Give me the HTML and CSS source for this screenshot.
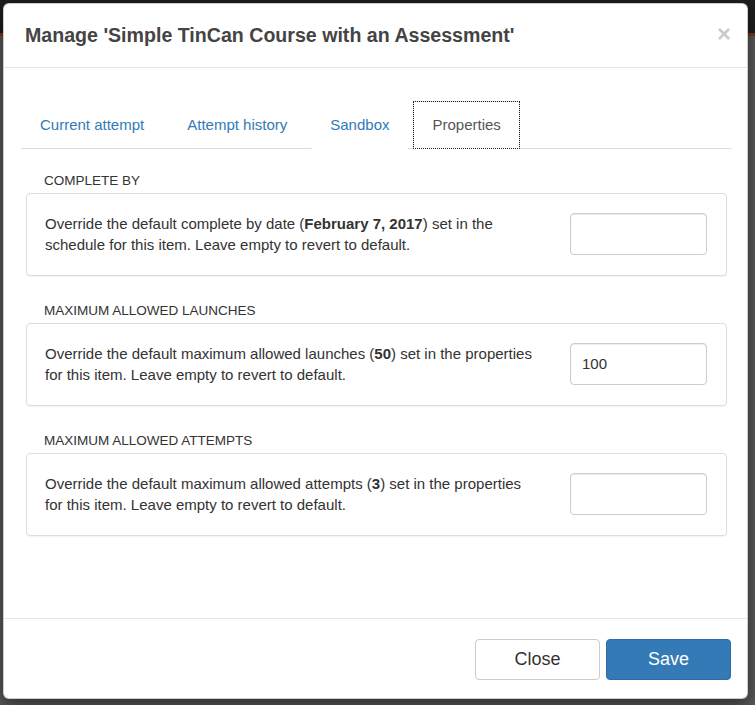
FILE: index.html
```html
<!DOCTYPE html>
<html>
<head>
<meta charset="utf-8">
<link rel="stylesheet" href="styles.css">
</head>
<body>
<div class="page">
  <div class="topbar"></div>
</div>
<div class="modal">
  <div class="modal-header">
    <h4 class="modal-title">Manage 'Simple TinCan Course with an Assessment'</h4>
    <span class="close">&times;</span>
  </div>
  <div class="modal-body">
    <ul class="tabs">
      <li class="tab">Current attempt</li>
      <li class="tab">Attempt history</li>
      <li class="tab hover">Sandbox</li>
      <li class="tab active">Properties</li>
    </ul>
    <div class="tab-content">
      <div class="section">
        <div class="label">Complete By</div>
        <div class="card">
          <div class="desc">Override the default complete by date (<b>February 7, 2017</b>) set in the schedule for this item. Leave empty to revert to default.</div>
          <div class="field"></div>
        </div>
      </div>
      <div class="section">
        <div class="label">Maximum Allowed Launches</div>
        <div class="card">
          <div class="desc">Override the default maximum allowed launches (<b>50</b>) set in the properties for this item. Leave empty to revert to default.</div>
          <div class="field">100</div>
        </div>
      </div>
      <div class="section">
        <div class="label">Maximum Allowed Attempts</div>
        <div class="card">
          <div class="desc">Override the default maximum allowed attempts (<b>3</b>) set in the properties for this item. Leave empty to revert to default.</div>
          <div class="field"></div>
        </div>
      </div>
    </div>
  </div>
  <div class="modal-footer">
    <button class="btn btn-default">Close</button>
    <button class="btn btn-primary">Save</button>
  </div>
</div>
</body>
</html>
```

FILE: styles.css
```css
html, body {
  margin: 0;
  padding: 0;
  height: 100%;
}
body {
  background: #585858;
  font-family: "Liberation Sans", Arial, sans-serif;
  color: #333;
  overflow: hidden;
}
.page {
  height: 100%;
}
.topbar {
  height: 33px;
  background: #1e1e1e;
  border-bottom: 3px solid #7a3518;
}
.modal {
  position: absolute;
  left: 3px;
  top: 3px;
  width: 745px;
  height: 696px;
  box-sizing: border-box;
  background: #fff;
  border: 1px solid rgba(0,0,0,.2);
  border-radius: 6px;
  box-shadow: 0 5px 15px rgba(0,0,0,.5);
  display: flex;
  flex-direction: column;
}
.modal-header {
  height: 63px;
  border-bottom: 1px solid #e5e5e5;
  display: flex;
  align-items: center;
  justify-content: space-between;
  padding: 0 16px 0 21px;
  flex: none;
}
.modal-title {
  margin: 0;
  font-size: 19.6px;
  font-weight: bold;
  color: #444;
  line-height: 22px;
  padding-bottom: 2px;
}
.close {
  font-size: 24px;
  font-weight: bold;
  color: #000;
  opacity: .2;
  line-height: 1;
  margin-top: -4px;
}
.modal-body {
  flex: 1;
  padding: 33px 15px 0 17px;
}
.tabs {
  list-style: none;
  margin: 0;
  padding: 0;
  display: flex;
  border-bottom: 1px solid #ddd;
}
.tab {
  font-size: 15px;
  line-height: 21px;
  padding: 12px 18px 13px;
  margin-right: 5px;
  margin-bottom: -1px;
  border: 1px solid transparent;
  border-radius: 4px 4px 0 0;
  color: #337ab7;
}
.tab.hover {
  border-bottom-color: #fff;
}
.tab.active {
  color: #555;
  background: #fff;
  border-color: #ddd #ddd transparent;
  outline: 1px dotted #222;
  outline-offset: -1px;
  border-radius: 0;
}
.tab-content {
  padding: 0 5px;
}
.section {
  margin-top: 26px;
}
.section:first-child {
  margin-top: 23px;
}
.label {
  font-size: 13.5px;
  line-height: 18px;
  text-transform: uppercase;
  padding-left: 18px;
  margin-bottom: 3px;
  color: #333;
}
.card {
  border: 1px solid #ddd;
  border-radius: 4px;
  box-shadow: 0 1px 1px rgba(0,0,0,.05);
  padding: 19px 18px 20px;
  display: flex;
  align-items: center;
  gap: 25px;
  height: 42px;
}
.desc {
  width: 492px;
  font-size: 15px;
  line-height: 21px;
  color: #333;
}
.desc b {
  font-weight: bold;
}
.field {
  box-sizing: border-box;
  width: 137px;
  height: 42px;
  margin-left: 8px;
  border: 1px solid #ccc;
  border-radius: 4px;
  box-shadow: inset 0 1px 1px rgba(0,0,0,.075);
  font-size: 15px;
  line-height: 40px;
  padding: 0 11px;
  color: #333;
}
.modal-footer {
  flex: none;
  border-top: 1px solid #e5e5e5;
  padding: 20px 16px 18px;
  display: flex;
  justify-content: flex-end;
  gap: 6px;
}
.btn {
  width: 125px;
  height: 41px;
  font-family: "Liberation Sans", Arial, sans-serif;
  font-size: 18px;
  border-radius: 4px;
  border: 1px solid #ccc;
  padding: 0;
}
.btn-default {
  background: #fff;
  color: #333;
}
.btn-primary {
  background: #337ab7;
  border-color: #2e6da4;
  color: #fff;
}
```
